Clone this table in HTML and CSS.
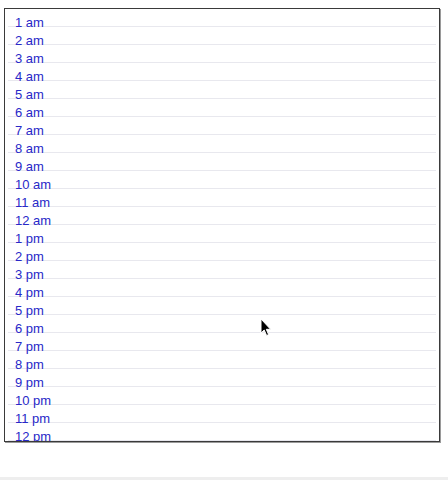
FILE: index.html
```html
<!DOCTYPE html>
<html>
<head>
<meta charset="utf-8">
<link rel="stylesheet" href="styles.css">
</head>
<body>
<div class="frame">
  <div class="row">1 am</div>
  <div class="row">2 am</div>
  <div class="row">3 am</div>
  <div class="row">4 am</div>
  <div class="row">5 am</div>
  <div class="row">6 am</div>
  <div class="row">7 am</div>
  <div class="row">8 am</div>
  <div class="row">9 am</div>
  <div class="row">10 am</div>
  <div class="row">11 am</div>
  <div class="row">12 am</div>
  <div class="row">1 pm</div>
  <div class="row">2 pm</div>
  <div class="row">3 pm</div>
  <div class="row">4 pm</div>
  <div class="row">5 pm</div>
  <div class="row">6 pm</div>
  <div class="row">7 pm</div>
  <div class="row">8 pm</div>
  <div class="row">9 pm</div>
  <div class="row">10 pm</div>
  <div class="row">11 pm</div>
  <div class="row">12 pm</div>
</div>
<div class="strip"></div>
<svg class="cursor" width="12" height="19" viewBox="0 0 12 19">
  <path d="M1 1 L1 15 L4.2 12 L6.6 17.5 L8.6 16.6 L6.3 11.3 L10.6 11.3 Z" fill="#000" stroke="#fff" stroke-width="1"/>
</svg>
</body>
</html>
```

FILE: styles.css
```css
html, body {
  margin: 0;
  padding: 0;
  background: #ffffff;
}
body {
  position: relative;
  width: 448px;
  height: 480px;
  overflow: hidden;
  font-family: "Liberation Sans", Arial, sans-serif;
}
.frame {
  margin: 8px 0 0 4px;
  width: 434px;
  height: 432px;
  border: 1px solid #3a3a3a;
  box-shadow: 1px 1px 0 #9a9a9a;
  overflow: hidden;
}
.row {
  box-sizing: border-box;
  height: 18px;
  margin: 0 3px;
  padding: 8px 0 0 7px;
  line-height: 11px;
  font-size: 13px;
  color: #2828c8;
  border-bottom: 1px solid #e8e8ee;
}
.strip {
  margin-top: 35px;
  height: 3px;
  background: #eeeeee;
}
.cursor {
  position: absolute;
  left: 260px;
  top: 318px;
}
```
